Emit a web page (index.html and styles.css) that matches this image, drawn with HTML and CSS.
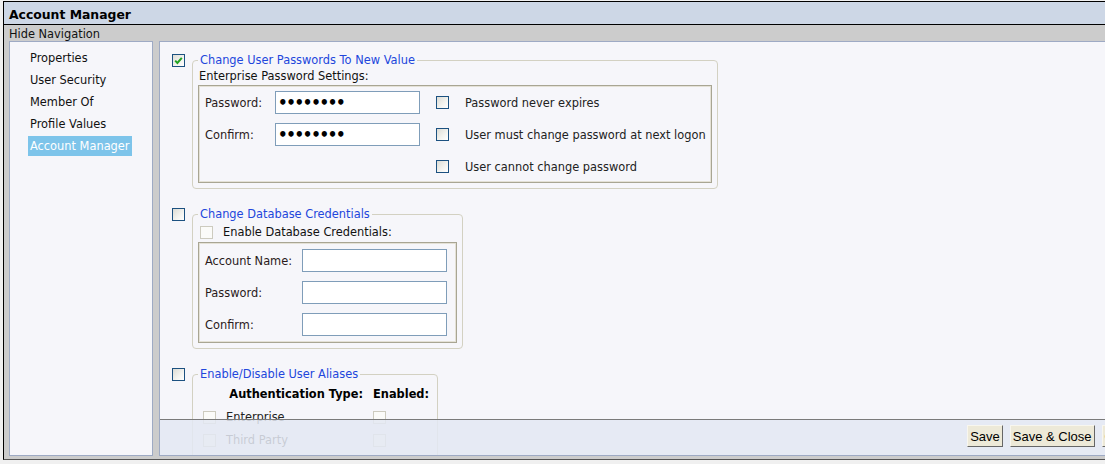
FILE: index.html
```html
<!DOCTYPE html>
<html>
<head>
<meta charset="utf-8">
<title>Account Manager</title>
<link rel="stylesheet" href="styles.css">
</head>
<body>
<div class="window">
  <div class="titlebar">Account Manager</div>
  <div class="toolbar">Hide Navigation</div>
  <div class="body">
    <nav class="nav">
      <span class="nav-item">Properties</span>
      <span class="nav-item">User Security</span>
      <span class="nav-item">Member Of</span>
      <span class="nav-item">Profile Values</span>
      <span class="nav-item selected">Account Manager</span>
    </nav>
    <main class="main">
      <div class="content">
        <section class="group">
          <span class="cb checked"><svg width="11" height="11" viewBox="0 0 11 11"><path d="M2.2 5.6 L4.4 7.9 L8.8 2.8" fill="none" stroke="#22a322" stroke-width="2"/></svg></span>
          <fieldset class="fs fs-pw">
            <legend>Change User Passwords To New Value</legend>
            <div class="sub">Enterprise Password Settings:</div>
            <div class="inset pw-grid">
              <span class="lbl">Password:</span>
              <input class="tb pw" type="password" value="abcdefgh">
              <span class="cb"></span>
              <span class="opt">Password never expires</span>
              <span class="lbl">Confirm:</span>
              <input class="tb pw" type="password" value="abcdefgh">
              <span class="cb"></span>
              <span class="opt">User must change password at next logon</span>
              <span></span>
              <span></span>
              <span class="cb"></span>
              <span class="opt">User cannot change password</span>
            </div>
          </fieldset>
        </section>

        <section class="group">
          <span class="cb"></span>
          <fieldset class="fs fs-db">
            <legend>Change Database Credentials</legend>
            <div class="sub-row"><span class="cb disabled"></span><span>Enable Database Credentials:</span></div>
            <div class="inset db-grid">
              <span class="lbl">Account Name:</span>
              <input class="tb" type="text">
              <span class="lbl">Password:</span>
              <input class="tb" type="text">
              <span class="lbl">Confirm:</span>
              <input class="tb" type="text">
            </div>
          </fieldset>
        </section>

        <section class="group">
          <span class="cb"></span>
          <fieldset class="fs fs-alias">
            <legend>Enable/Disable User Aliases</legend>
            <div class="alias-grid">
              <span></span>
              <span class="th th-type">Authentication Type:</span>
              <span class="th">Enabled:</span>
              <span class="cb disabled"></span>
              <span class="alias-name">Enterprise</span>
              <span class="cb disabled"></span>
              <span class="cb disabled"></span>
              <span class="alias-name">Third Party</span>
              <span class="cb disabled"></span>
            </div>
          </fieldset>
        </section>
      </div>
      <div class="footer">
        <button class="btn">Save</button>
        <button class="btn">Save &amp; Close</button>
        <button class="btn">Cancel</button>
      </div>
    </main>
  </div>
</div>
</body>
</html>
```

FILE: styles.css
```css
html, body {
  margin: 0;
  padding: 0;
  overflow: hidden;
}
body {
  background: #f0f0f0;
  font-family: "DejaVu Sans", sans-serif;
  font-size: 11.4px;
  line-height: 14px;
  color: #111;
  width: 1105px;
  height: 464px;
}
.window {
  margin: 1px 0 0 3px;
  width: 1156px;
  border-left: 1px solid #000;
  border-top: 1px solid #000;
  border-bottom: 1px solid #555;
  background: #cccccc;
}
.titlebar {
  height: 19px;
  padding-top: 3px;
  line-height: 20px;
  background: #cdd7e6;
  border-bottom: 1px solid #000;
  padding-left: 5px;
  font-weight: bold;
  font-size: 12.4px;
  color: #000;
}
.toolbar {
  height: 15px;
  padding-top: 1px;
  line-height: 16px;
  background: #cccccc;
  padding-left: 5px;
  color: #111;
}
.body {
  display: flex;
  gap: 6px;
  padding: 0 5px 3px 5px;
  height: 415px;
}
.nav {
  flex: none;
  width: 144px;
  box-sizing: border-box;
  background: #f6f6fa;
  border: 1px solid #9eaac4;
  display: flex;
  flex-direction: column;
  align-items: flex-start;
  gap: 2px;
  padding-top: 6px;
  padding-left: 18px;
}
.nav-item {
  height: 20px;
  line-height: 20px;
  padding: 0 2px;
  color: #111;
  white-space: nowrap;
}
.nav-item.selected {
  background: #7dc4ea;
  color: #fff;
}
.main {
  flex: 1;
  position: relative;
  background: #f6f6fa;
  border: 1px solid #9eaac4;
  overflow: hidden;
}
.content {
  padding: 11px 0 0 12px;
  display: flex;
  flex-direction: column;
  gap: 18px;
}
.group {
  display: flex;
  align-items: flex-start;
  gap: 7px;
}
.group > .cb {
  margin-top: 1px;
}
.cb {
  display: inline-flex;
  align-items: center;
  justify-content: center;
  width: 13px;
  height: 13px;
  box-sizing: border-box;
  border: 1px solid #1c5180;
  background: linear-gradient(135deg, #dcdcd5 0%, #f4f4f0 60%, #ffffff 100%);
  flex: none;
}
.cb.disabled {
  border-color: #cdcbbf;
  background: #fbfbf9;
}
.fs {
  margin: 0;
  border: 1px solid #d3d1c2;
  border-radius: 4px;
  padding: 2px 5px 5px 5px;
  min-width: 0;
  box-sizing: border-box;
}
.fs legend {
  padding: 0 2px;
  margin-left: 0;
  color: #2246dc;
  line-height: 14px;
  white-space: nowrap;
}
.fs-pw { width: 526px; }
.fs-db { width: 271px; }
.fs-alias { width: 246px; padding-bottom: 40px; }
.sub {
  margin-left: 1px;
  margin-bottom: 2px;
  white-space: nowrap;
}
.inset {
  border: 1px solid #a8a593;
  box-shadow: inset 0 0 0 1px #e4e1d6;
  padding: 5px;
}
.pw-grid {
  display: grid;
  grid-template-columns: 54px 145px 13px auto;
  grid-auto-rows: 23px;
  column-gap: 16px;
  row-gap: 9px;
  align-items: center;
  padding: 5px 0 4px 6px;
}
.lbl {
  color: #2a1a1a;
  white-space: nowrap;
}
.tb {
  box-sizing: border-box;
  width: 145px;
  height: 23px;
  margin: 0;
  border: 1px solid #7f9db9;
  background: #fff;
  padding: 0 2px;
  font-family: "DejaVu Sans", sans-serif;
  font-size: 11px;
  outline: none;
}
.tb.pw {
  font-size: 15px;
  font-weight: bold;
  letter-spacing: -1.3px;
  color: #000;
}
.opt {
  color: #222;
  white-space: nowrap;
}
.sub-row {
  display: flex;
  align-items: center;
  gap: 10px;
  padding: 2px 0 0 2px;
  margin-bottom: 3px;
  white-space: nowrap;
}
.db-grid {
  display: grid;
  grid-template-columns: 81px 145px;
  grid-auto-rows: 23px;
  column-gap: 16px;
  row-gap: 9px;
  align-items: center;
  padding: 6px 0 6px 6px;
}
.alias-grid {
  display: grid;
  grid-template-columns: 13px 137px auto;
  column-gap: 10px;
  row-gap: 9px;
  grid-auto-rows: 14px;
  align-items: center;
  padding: 4px 0 0 5px;
}
.th {
  font-weight: bold;
  color: #000;
  white-space: nowrap;
}
.th-type {
  text-align: right;
}
.alias-name {
  color: #222;
}
.footer {
  position: absolute;
  left: 0;
  right: 0;
  bottom: 0;
  height: 36px;
  box-sizing: border-box;
  border-top: 1px solid #7a7a7a;
  background: rgba(227, 232, 242, 0.86);
  display: flex;
  justify-content: flex-end;
  align-items: flex-start;
  gap: 7px;
  padding: 5px 6px 0 0;
}
.btn {
  height: 22px;
  margin: 0;
  padding: 0 2px;
  background: #ede9d8;
  border: 1px solid;
  border-color: #f8f6ee #666 #666 #f8f6ee;
  font-family: "Liberation Sans", Arial, sans-serif;
  font-size: 13px;
  color: #000;
  border-radius: 0;
}
```
